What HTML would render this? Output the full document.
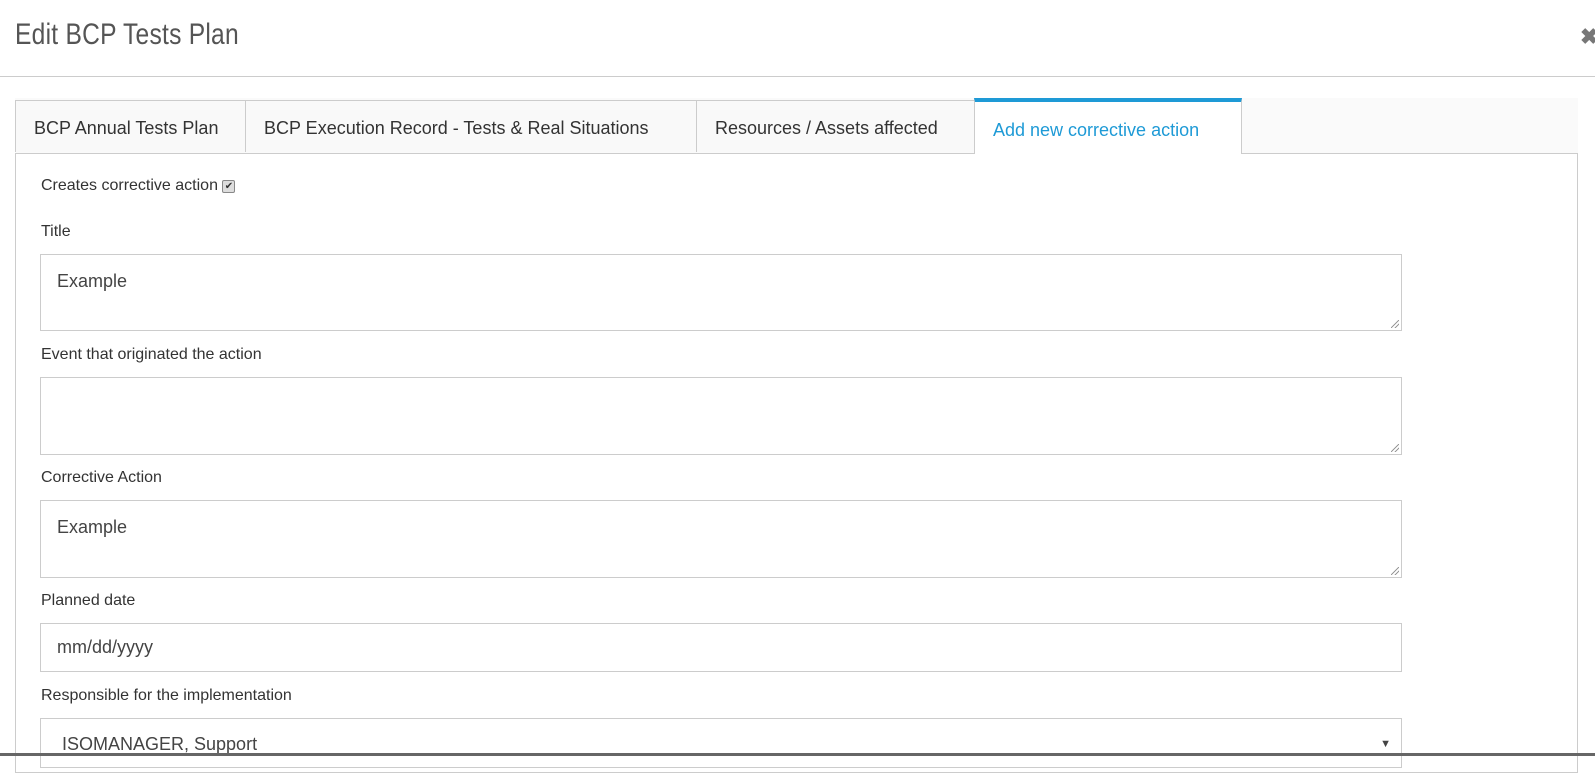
<!DOCTYPE html>
<html><head><style>
body{margin:0;width:1595px;height:756px;overflow:hidden;background:#fff;font-family:"Liberation Sans",sans-serif;position:relative;color:#333}
.a{position:absolute}
.title{left:15px;top:18px;font-size:30px;color:#555;transform:scaleX(.82);transform-origin:left;letter-spacing:.3px}
.hr{left:0;top:76px;width:1595px;height:1px;background:#ccc}
.strip{left:15px;top:98px;width:1563px;height:55px;background:#fafafa}
.tab{top:100px;height:52px;border:1px solid #ccc;border-bottom:none;background:#f9f9f9;font-size:18px;line-height:54px;color:#333;box-sizing:border-box;padding-left:18px;white-space:nowrap}
.box{left:15px;top:153px;width:1563px;height:620px;border:1px solid #ccc;box-sizing:border-box;border-top:1px solid #ccc}
.lbl{left:41px;font-size:16px;color:#333}
.inp{left:40px;width:1362px;border:1px solid #ccc;box-sizing:border-box;background:#fff;font-size:18px;color:#444;padding-left:16px}
.rs{position:absolute;right:2px;bottom:2px;width:8px;height:8px;background:linear-gradient(135deg,transparent 45%,#999 45%,#999 55%,transparent 55%,transparent 70%,#999 70%,#999 80%,transparent 80%)}
</style></head><body>
<div class="a title">Edit BCP Tests Plan</div>
<div class="a" style="left:1580px;top:24px;font-size:22px;color:#777;font-weight:bold">✖</div>
<div class="a hr"></div>
<div class="a strip"></div>
<div class="a box"></div>
<div class="a tab" style="left:15px;width:231px">BCP Annual Tests Plan</div>
<div class="a tab" style="left:245px;width:452px">BCP Execution Record - Tests &amp; Real Situations</div>
<div class="a tab" style="left:696px;width:279px">Resources / Assets affected</div>
<div class="a tab" style="left:974px;width:268px;top:98px;height:56px;background:#fff;border-top:4px solid #1e9ad6;color:#1e9ad6;line-height:56px">Add new corrective action</div>
<div class="a lbl" style="top:177px">Creates corrective action <span style="display:inline-block;width:11px;height:11px;border:1px solid #888;border-radius:2px;background:#ddd;font-size:10px;line-height:11px;text-align:center;vertical-align:1px">✔</span></div>
<div class="a lbl" style="top:223px">Title</div>
<div class="a inp" style="top:254px;height:77px;padding-top:16px">Example<div class="rs"></div></div>
<div class="a lbl" style="top:346px">Event that originated the action</div>
<div class="a inp" style="top:377px;height:78px"><div class="rs"></div></div>
<div class="a lbl" style="top:469px">Corrective Action</div>
<div class="a inp" style="top:500px;height:78px;padding-top:16px">Example<div class="rs"></div></div>
<div class="a lbl" style="top:592px">Planned date</div>
<div class="a inp" style="top:623px;height:49px;line-height:47px">mm/dd/yyyy</div>
<div class="a lbl" style="top:687px">Responsible for the implementation</div>
<div class="a inp" style="top:718px;height:50px;line-height:50px;padding-left:21px">ISOMANAGER, Support<span style="position:absolute;right:10px;font-size:11px">▼</span></div>
<div class="a" style="left:0;top:753px;width:1595px;height:3px;background:#666"></div>
</body></html>
